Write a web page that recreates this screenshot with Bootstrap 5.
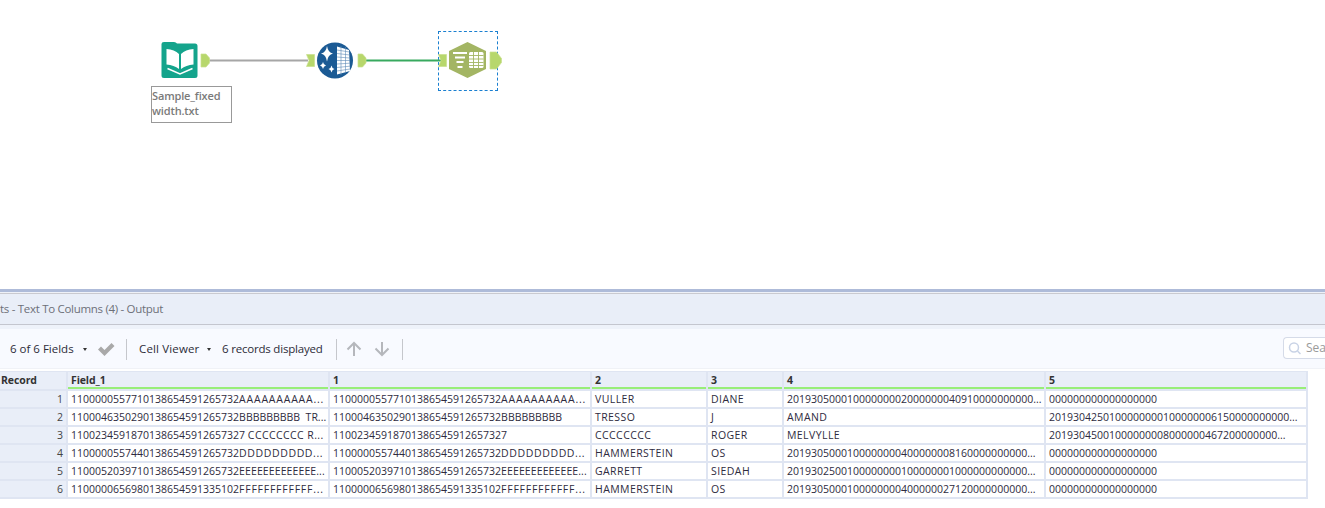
<!DOCTYPE html>
<html lang="en"><head><meta charset="utf-8"><title>Workflow</title>
<link href="https://cdn.jsdelivr.net/npm/bootstrap@5.3.0/dist/css/bootstrap.min.css" rel="stylesheet">
<script src="https://cdn.jsdelivr.net/npm/bootstrap@5.3.0/dist/js/bootstrap.bundle.min.js"></script>
<style>
html,body{width:1325px;height:508px;overflow:hidden;background:#fff}
body{font-family:"Open Sans","Noto Sans",sans-serif;font-size:11px;color:#2c2c38}
.wf-canvas{position:relative;height:289px;background:#fff}
.wf-canvas svg{position:absolute;left:0;top:0}
.wf-label{position:absolute;left:151px;top:86px;width:81px;height:37px;border:1px solid #999;padding:1px 0 0 0;font:600 11px/15px "Open Sans",sans-serif;letter-spacing:-.15px;color:#7a7a7a;background:#fff}
.wf-select{position:absolute;left:438px;top:31px;width:60px;height:60px;border:1px dashed #1a7fd0}
.wf-anchor{fill:#b7d76c;stroke:#c9e08e;stroke-width:.7}
.res-split{height:4px;background:#aebbd9;border-bottom:1px solid #eef1f8}
.res-title{height:32px;background:#e9eef8;border-top:1px solid #c9c9cf;border-bottom:1px solid #c4c6cf;font-size:11.5px;letter-spacing:-.3px;color:#6d7078;white-space:nowrap}
.res-gap{height:4px;background:#eef2fa}
.res-tools{height:40px;background:#f8faff;border-bottom:1px solid #f0f2f7;font-size:11.5px;letter-spacing:-.2px;color:#2c2c38;white-space:nowrap;padding-top:1px}
.res-caret{width:0;height:0;border-left:2.5px solid transparent;border-right:2.5px solid transparent;border-top:3px solid #333}
.res-sep{width:1px;height:21px;background:#c5c7cc}
.res-search{width:42px;height:22px;border:1px solid #d5dbe8;border-right:0;border-radius:4px 0 0 4px;background:#fff;color:#9a9a9a;overflow:hidden;margin-left:auto;font-size:12px;letter-spacing:0;margin-top:-3px}
.m10{margin-left:10px}.m11{margin-left:11px}.m12{margin-left:12px}.m13{margin-left:13px}.m9{margin-left:9px}
.res-w1{width:73px;letter-spacing:0}.res-w2{width:68px;letter-spacing:.15px}
.res-gridwrap{padding-top:2px;background:#fff}
table.res-table{table-layout:fixed;width:1307px;margin:0;border-collapse:collapse;--bs-table-bg:transparent;font-size:10.5px;color:#2c2c3c}
table.res-table th,table.res-table td{height:18px;padding:1px 0 0 3px;border:2px solid #dfe5f2;line-height:15px;white-space:nowrap;overflow:hidden;vertical-align:middle;box-shadow:none;color:#2e2b40;background:#fff}
table.res-table thead th{height:18px;background:#e9eef8;font-weight:700;border-top-width:1px;letter-spacing:-.1px;color:#333;padding-bottom:1px;box-shadow:inset 0 -2px 0 #98ee78}
table.res-table thead th.rec{padding-left:1px;border-left:0;box-shadow:none}
table.res-table td.rec{background:#e9eef8;text-align:right;padding:1px 3px 0 0;border-left:0;color:#444}
.res-alp{letter-spacing:.42px}
.ls-a{letter-spacing:.8px}.ls-b{letter-spacing:0}.ls-d{letter-spacing:.6px}.ls-e{letter-spacing:.1px}.ls-f{letter-spacing:.75px}
</style></head><body>
<div class="wf-canvas">
<div class="wf-select"></div>
<svg width="1325" height="289" viewBox="0 0 1325 289" role="img" aria-label="Workflow">
<line x1="209" y1="60.500" x2="308" y2="60.500" stroke="#a6a6a6" stroke-width="2"/>
<line x1="365" y1="60.500" x2="442" y2="60.500" stroke="#38a95f" stroke-width="2"/>
<path d="M164 42h10q2 0 3 1.500h18q2.500 0 2.500 2.500v29.500q0 2.500-2.500 2.500h-31q-2.500 0-2.500-2.500v-31.500q0-2 2.500-2z" fill="#14a48c"/>
<path d="M166.500 49q8 .5 12.500 5v15q-5-4-12.500-4.500zM193.500 49q-8 .5-12.500 5v15q5-4 12.500-4.500z" fill="#fff"/>
<path d="M167.500 68.500l12.500 5.500 12.500-5.500" fill="none" stroke="#fff" stroke-width="1.500"/>
<path class="wf-anchor" d="M201 54h5l3.500 4v5l-3.500 4h-5z"/>
<path class="wf-anchor" d="M306.500 54.500h8v12h-8l2.500-6z"/>
<path class="wf-anchor" d="M358 54h4.500l3.500 4v5l-3.500 4h-4.500z"/>
<path class="wf-anchor" d="M438.500 54.500h8v12h-8l2.500-6z"/>
<path class="wf-anchor" d="M490 52h6.500l5 6.500v4l-5 6.500h-6.500z"/>
<circle cx="335" cy="60.500" r="18" fill="#1b5a94"/>
<path d="M337 46.500l12 3.500 1 21-13 3.500z" fill="#fff"/>
<path d="M337 50l12.500 2M337 53.500l13 1.500M337 57l13 1M337 60.500h13M337 64l13-.8M337 67.500l13-1.300M337 71l13-2M341 46v29M345.500 47v26" stroke="#5e8bb7" stroke-width=".6" fill="none"/>
<path d="M327 46q1 6.500 6 7.500q-5 1-6 8q-1-7-6-8q5-1 6-7.500zM323 62q.5 3 3 3.500q-2.500 .5-3 3.500q-.5-3-3-3.500q2.500-.5 3-3.500zM331.500 65.500q.5 3 3 3.500q-2.500 .5-3 3.500q-.5-3-3-3.500q2.500-.5 3-3.500z" fill="#fff"/>
<path d="M467.500 42l18.500 9v18l-18.500 9-18.500-9v-18z" fill="#a3b563"/>
<path d="M453 52h14v2h-14zM455 56.500h10v2h-10zM456.500 61h7v2h-7zM457.500 66h5v2h-5z" fill="#fff"/>
<rect x="469" y="52" width="14.500" height="16" rx="1.500" fill="#fff"/>
<path d="M469 55.500h14.500M469 59h14.500M469 62.500h14.500M469 65.500h14.500M473.500 52v16M478.500 52v16" stroke="#a3b563" stroke-width=".9"/>
</svg>
<div class="wf-label">Sample_fixed width.txt</div>
</div>
<div class="res-split"></div>
<div class="res-title d-flex align-items-center">ts - Text To Columns (4) - Output</div>
<div class="res-gap"></div>
<div class="res-tools d-flex align-items-center">
<span class="m10 res-w1">6 of 6 Fields</span>
<span class="res-caret"></span>
<svg class="m10" width="18" height="14" viewBox="0 0 18 14" aria-hidden="true"><path d="M1 7.500l3-3 3.500 3.500 7-7 3 3-10 10z" fill="#a9a9a9"/></svg>
<span class="res-sep m11"></span>
<span class="res-w2 m12">Cell Viewer</span>
<span class="res-caret"></span>
<span class="m11">6 records displayed</span>
<span class="res-sep m13"></span>
<svg class="m9" width="16" height="16" viewBox="0 0 16 16" aria-hidden="true"><path d="M8 15V2M1.500 8.500L8 2l6.500 6.500" fill="none" stroke="#b5b7bc" stroke-width="2"/></svg>
<svg class="m12" width="16" height="16" viewBox="0 0 16 16" aria-hidden="true"><path d="M8 1v13M1.500 7.500L8 14l6.500-6.500" fill="none" stroke="#b5b7bc" stroke-width="2"/></svg>
<span class="res-sep m12"></span>
<div class="res-search d-flex align-items-center">
<svg class="ms-1 flex-shrink-0" width="14" height="14" viewBox="0 0 14 14" aria-hidden="true"><circle cx="6" cy="6.500" r="4.500" fill="none" stroke="#c9d3e6" stroke-width="1.500"/><path d="M9.500 10l3 3" stroke="#c9d3e6" stroke-width="1.500"/></svg>
<span class="ms-1">Sea</span></div>
</div>
<div class="res-gridwrap">
<table class="table res-table">
<colgroup><col style="width:67px"><col style="width:262px"><col style="width:262px"><col style="width:116px"><col style="width:76px"><col style="width:262px"><col style="width:262px"></colgroup>
<thead><tr><th class="rec">Record</th><th>Field_1</th><th>1</th><th>2</th><th>3</th><th>4</th><th>5</th></tr></thead>
<tbody>
<tr><td class="rec">1</td><td>1100000557710138654591265732<span class="ls-a">AAAAAAAAAA...</span></td><td>1100000557710138654591265732<span class="ls-a">AAAAAAAAAA...</span></td><td class="res-alp">VULLER</td><td class="res-alp">DIANE</td><td>20193050001000000002000000040910000000000...</td><td>000000000000000000</td></tr>
<tr><td class="rec">2</td><td>1100046350290138654591265732<span class="ls-b">BBBBBBBBB&nbsp; TR...</span></td><td>1100046350290138654591265732<span class="ls-b">BBBBBBBBB</span></td><td class="res-alp">TRESSO</td><td class="res-alp">J</td><td class="res-alp">AMAND</td><td>2019304250100000000100000006150000000000...</td></tr>
<tr><td class="rec">3</td><td>11002345918701386545912657327 <span class="res-alp">CCCCCCCC R...</span></td><td>11002345918701386545912657327</td><td class="res-alp">CCCCCCCC</td><td class="res-alp">ROGER</td><td class="res-alp">MELVYLLE</td><td>20193045001000000008000000467200000000...</td></tr>
<tr><td class="rec">4</td><td>1100000557440138654591265732<span class="ls-d">DDDDDDDDD...</span></td><td>1100000557440138654591265732<span class="ls-d">DDDDDDDDD...</span></td><td class="res-alp">HAMMERSTEIN</td><td class="res-alp">OS</td><td>2019305000100000000400000008160000000000...</td><td>000000000000000000</td></tr>
<tr><td class="rec">5</td><td>1100052039710138654591265732<span class="ls-e">EEEEEEEEEEEEE...</span></td><td>1100052039710138654591265732<span class="ls-e">EEEEEEEEEEEEE...</span></td><td class="res-alp">GARRETT</td><td class="res-alp">SIEDAH</td><td>2019302500100000000100000001000000000000...</td><td>000000000000000000</td></tr>
<tr><td class="rec">6</td><td>1100000656980138654591335102<span class="ls-f">FFFFFFFFFFFF...</span></td><td>1100000656980138654591335102<span class="ls-f">FFFFFFFFFFFF...</span></td><td class="res-alp">HAMMERSTEIN</td><td class="res-alp">OS</td><td>2019305000100000000400000027120000000000...</td><td>000000000000000000</td></tr>
</tbody></table></div>
</body></html>
